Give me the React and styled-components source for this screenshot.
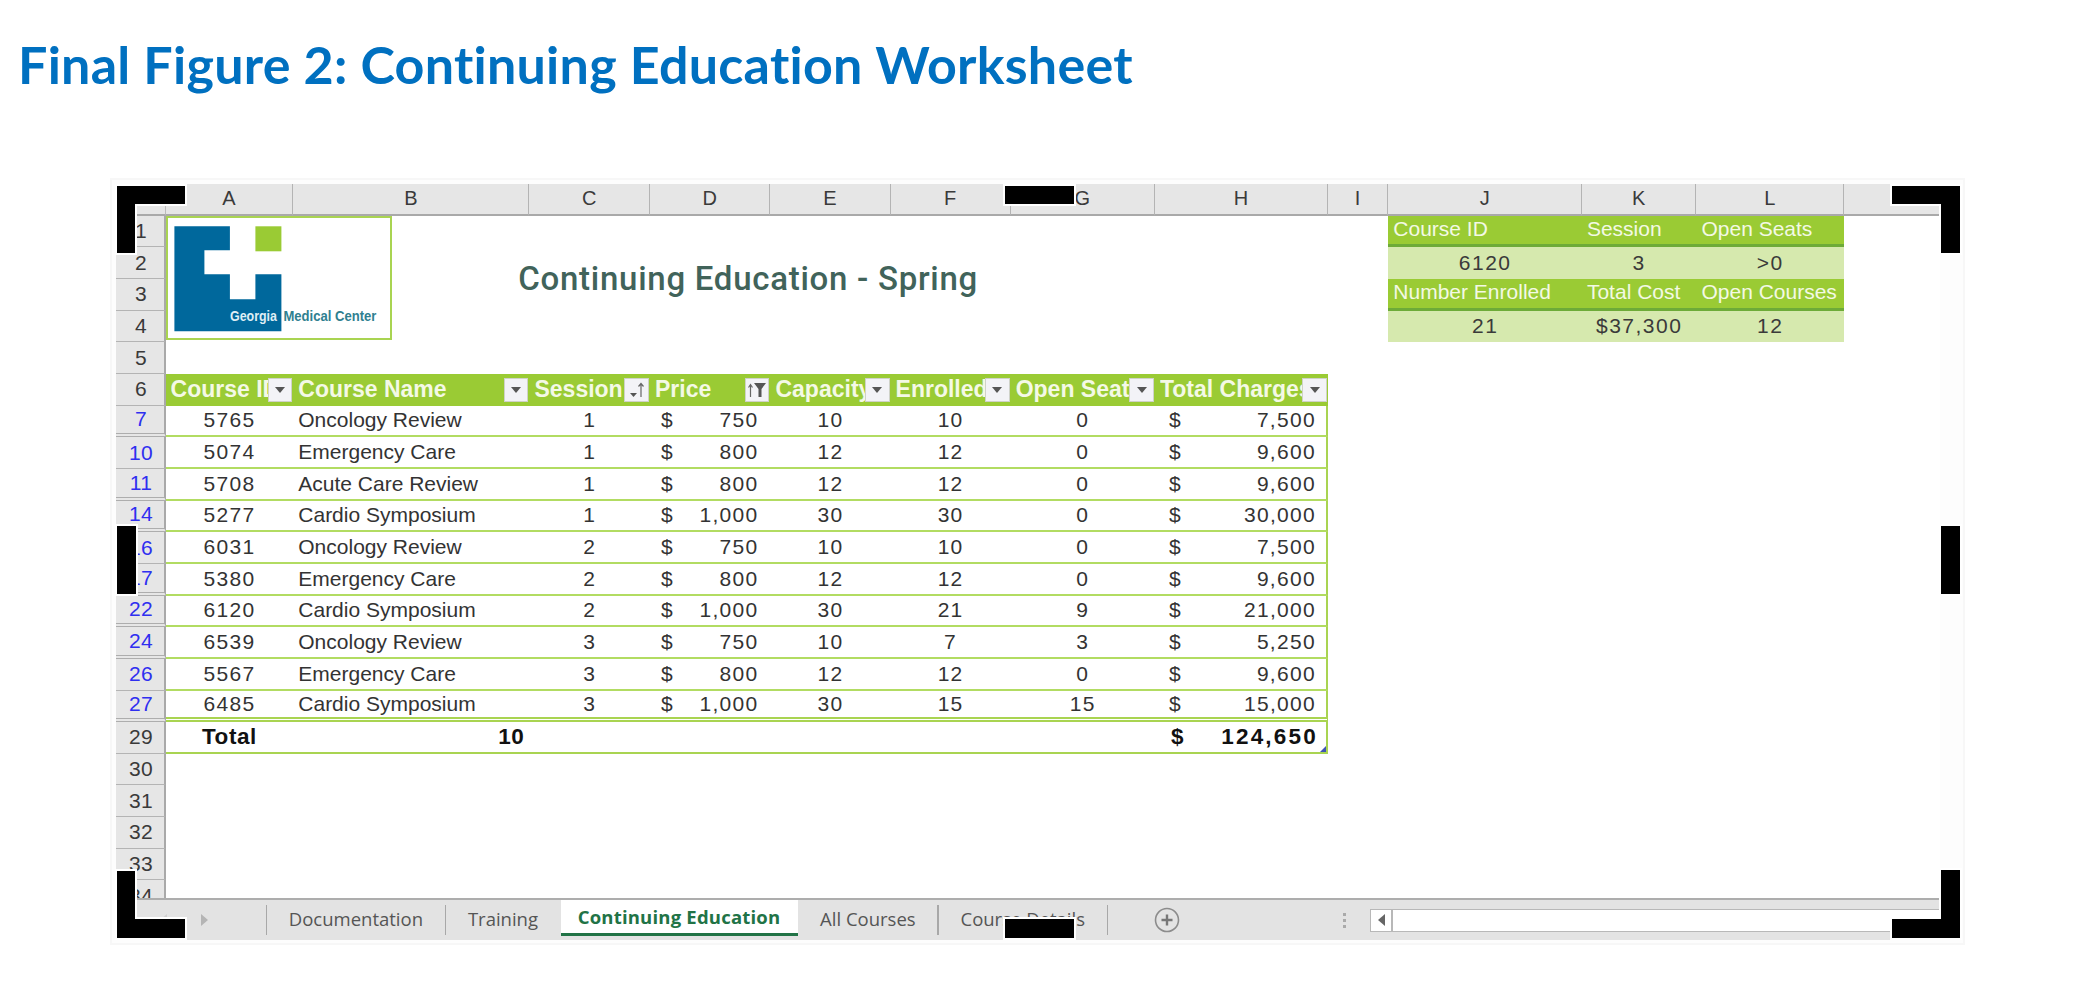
import React from 'react'
import styled, { createGlobalStyle } from 'styled-components'

const GlobalStyle = createGlobalStyle`
  html, body {
    margin: 0;
    padding: 0;
    background: #fff;
  }
  * {
    box-sizing: border-box;
  }
`

const LETTERS = ['A', 'B', 'C', 'D', 'E', 'F', 'G', 'H', 'I', 'J', 'K', 'L', '']

const HEADERS = [
  { label: 'Course ID', icon: 'drop' },
  { label: 'Course Name', icon: 'drop' },
  { label: 'Session', icon: 'sort' },
  { label: 'Price', icon: 'filter' },
  { label: 'Capacity', icon: 'drop' },
  { label: 'Enrolled', icon: 'drop' },
  { label: 'Open Seats', icon: 'drop' },
  { label: 'Total Charges', icon: 'drop' },
]

// row number, id, name, session, price, capacity, enrolled, open, total, gap after
const ROWS = [
  [7, '5765', 'Oncology Review', '1', '750', '10', '10', '0', '7,500', true],
  [10, '5074', 'Emergency Care', '1', '800', '12', '12', '0', '9,600', false],
  [11, '5708', 'Acute Care Review', '1', '800', '12', '12', '0', '9,600', true],
  [14, '5277', 'Cardio Symposium', '1', '1,000', '30', '30', '0', '30,000', true],
  [16, '6031', 'Oncology Review', '2', '750', '10', '10', '0', '7,500', false],
  [17, '5380', 'Emergency Care', '2', '800', '12', '12', '0', '9,600', true],
  [22, '6120', 'Cardio Symposium', '2', '1,000', '30', '21', '9', '21,000', true],
  [24, '6539', 'Oncology Review', '3', '750', '10', '7', '3', '5,250', true],
  [26, '5567', 'Emergency Care', '3', '800', '12', '12', '0', '9,600', false],
  [27, '6485', 'Cardio Symposium', '3', '1,000', '30', '15', '15', '15,000', true],
]

const SUMMARY = [
  ['Course ID', 'Session', 'Open Seats'],
  ['6120', '3', '>0'],
  ['Number Enrolled', 'Total Cost', 'Open Courses'],
  ['21', '$37,300', '12'],
]

const TABS = ['Documentation', 'Training', 'Continuing Education', 'All Courses', 'Course Details']

const App = () => {
  return (
    <Page>
      <GlobalStyle />
      <PageTitle>Final Figure 2: Continuing Education Worksheet</PageTitle>
      <Frame>
        <Sheet>
          <Grid>
            <Corner />
            {LETTERS.map((l, i) => (
              <ColHead key={i} $col={i + 2}>{l}</ColHead>
            ))}

            {[1, 2, 3, 4, 5, 6].map((n) => (
              <RowHead key={n} $row={n + 1}>{n}</RowHead>
            ))}

            <LogoBox>
              <svg width='222' height='120' viewBox='2 2 222 120'>
                <polygon
                  fill='#00689c'
                  points='8.4,10.3 63.9,10.3 63.9,34.3 38.4,34.3 38.4,58.3 63.9,58.3 63.9,83.3 89.4,83.3 89.4,58.3 115.4,58.3 115.4,115.3 8.4,115.3'
                />
                <rect x='89.4' y='10.3' width='26' height='25' fill='#9acb34' />
                <LogoText x='64' y='105' textLength='47' lengthAdjust='spacingAndGlyphs' fill='#dfeef5'>
                  Georgia
                </LogoText>
                <LogoText x='117.4' y='105' textLength='93' lengthAdjust='spacingAndGlyphs' fill='#2f8090'>
                  Medical Center
                </LogoText>
              </svg>
            </LogoBox>
            <SheetTitle>Continuing Education - Spring</SheetTitle>

            {SUMMARY.map((line, r) =>
              line.map((text, c) =>
                r % 2 === 0 ? (
                  <SummaryHead key={text} $row={r + 2} $col={c + 11}>{text}</SummaryHead>
                ) : (
                  <SummaryValue key={text} $row={r + 2} $col={c + 11}>{text}</SummaryValue>
                )
              )
            )}

            {HEADERS.map((h, i) => (
              <HeadCell key={h.label} $col={i + 2}>
                <HeadLabel>{h.label}</HeadLabel>
                <FilterButton>
                  <FilterIcon type={h.icon} />
                </FilterButton>
              </HeadCell>
            ))}

            {ROWS.map((r, i) => {
              const row = i + 8
              const [num, id, name, session, price, capacity, enrolled, open, total, gap] = r
              const last = i === ROWS.length - 1
              return (
                <React.Fragment key={num}>
                  <RowHead $row={row} $blue $gap={gap}>{num}</RowHead>
                  <Cell $row={row} $col={2} $center $double={last}>{id}</Cell>
                  <NameCell $row={row} $col={3} $double={last}>{name}</NameCell>
                  <Cell $row={row} $col={4} $center $double={last}>{session}</Cell>
                  <MoneyCell $row={row} $col={5} $double={last}>
                    <span>$</span>
                    <span>{price}</span>
                  </MoneyCell>
                  <Cell $row={row} $col={6} $center $double={last}>{capacity}</Cell>
                  <Cell $row={row} $col={7} $center $double={last}>{enrolled}</Cell>
                  <Cell $row={row} $col={8} $center $double={last}>{open}</Cell>
                  <MoneyCell $row={row} $col={9} $end $double={last}>
                    <span>$</span>
                    <span>{total}</span>
                  </MoneyCell>
                </React.Fragment>
              )
            })}

            <RowHead $row={18}>29</RowHead>
            <TotalCell $row={18} $col={2} $center>Total</TotalCell>
            <TotalCell $row={18} $col={3} $right>10</TotalCell>
            {[4, 5, 6, 7, 8].map((c) => (
              <TotalCell key={c} $row={18} $col={c} />
            ))}
            <TotalMoney $row={18} $col={9} $end>
              <span>$</span>
              <span>124,650</span>
              <ResizeHandle />
            </TotalMoney>

            {[30, 31, 32, 33, 34].map((n, i) => (
              <RowHead key={n} $row={i + 19}>{n}</RowHead>
            ))}
          </Grid>

          <TabBar>
            <TabArrows>
              <ArrowLeft $faint />
              <ArrowRight />
            </TabArrows>
            <TabSep />
            {TABS.map((t, i) => (
              <React.Fragment key={t}>
                <Tab $active={i === 2}>{t}</Tab>
                {i !== 1 && i !== 2 && <TabSep />}
              </React.Fragment>
            ))}
            <AddSheet>
              <svg width='26' height='26' viewBox='0 0 26 26'>
                <circle cx='13' cy='13' r='11.5' fill='none' stroke='#8c8c8c' strokeWidth='1.6' />
                <path d='M13 7.5v11M7.5 13h11' stroke='#777' strokeWidth='2.4' />
              </svg>
            </AddSheet>
            <Grip>
              <i />
              <i />
              <i />
            </Grip>
            <ScrollTrack>
              <ScrollButton>
                <ArrowLeft />
              </ScrollButton>
            </ScrollTrack>
          </TabBar>
        </Sheet>
      </Frame>

      <CropMarks width='2079' height='997' viewBox='0 0 2079 997'>
        <g fill='#000' stroke='#fff' strokeWidth='4' paintOrder='stroke'>
          <polygon points='117,186 185,186 185,204 135,204 135,253 117,253' />
          <rect x='1005' y='186' width='69' height='18' />
          <polygon points='1892,186 1960,186 1960,253 1941,253 1941,204 1892,204' />
          <rect x='117' y='526' width='19' height='68' />
          <rect x='1941' y='526' width='19' height='68' />
          <polygon points='117,871 135,871 135,919 185,919 185,938 117,938' />
          <rect x='1005' y='919' width='69' height='19' />
          <polygon points='1941,870 1960,870 1960,938 1892,938 1892,919 1941,919' />
        </g>
      </CropMarks>
    </Page>
  )
}

const FilterIcon = ({ type }) => {
  if (type === 'sort') {
    return (
      <svg width='18' height='18' viewBox='0 0 18 18'>
        <path d='M2 12h7l-3.5 4z' fill='#555' />
        <path d='M13 16V3M10.5 5.5L13 2.5l2.5 3' fill='none' stroke='#666' strokeWidth='1.2' />
      </svg>
    )
  }
  if (type === 'filter') {
    return (
      <svg width='20' height='18' viewBox='0 0 20 18'>
        <path d='M3.5 16V4M1.5 6.5L3.5 3.5l2 3' fill='none' stroke='#666' strokeWidth='1.2' />
        <path d='M7 2h12l-4.5 6v8h-3V8z' fill='#555' />
      </svg>
    )
  }
  return (
    <svg width='12' height='8' viewBox='0 0 12 8'>
      <path d='M1 1h10l-5 6z' fill='#555' />
    </svg>
  )
}

export default App

const sansStack = `'Liberation Sans', Arial, sans-serif`

const Page = styled.div`
  position: relative;
  width: 2079px;
  height: 997px;
  overflow: hidden;
  background: #fff;
  padding: 33px 0 0 18px;
`

const PageTitle = styled.h1`
  margin: 0;
  height: 145px;
  font-family: 'Lato', sans-serif;
  font-size: 52px;
  line-height: 62px;
  font-weight: 700;
  letter-spacing: 0.25px;
  color: #0070c0;
`

const Frame = styled.div`
  margin-left: 92px;
  width: 1855px;
  height: 767px;
  padding: 4px 0 0 3.6px;
  background: #fdfdfd;
  border: 2px solid #f7f7f7;
`

const Sheet = styled.div`
  width: 1824px;
  height: 756px;
  background: #fff;
  font-family: ${sansStack};
  display: flex;
  flex-direction: column;
`

const Grid = styled.div`
  flex: 0 0 714px;
  display: grid;
  grid-template-columns: 50px 127.7px 236.2px 120.5px 120.5px 120.1px 120.1px 144.3px 173px 60.4px 193.6px 114.5px 147.5px 1fr;
  grid-auto-rows: 31.67px;
  overflow: hidden;
  font-size: 21px;
  color: #333;
`

const Corner = styled.div`
  grid-area: 1 / 1;
  background: #e6e6e6;
  border-bottom: 2px solid #a9a9a9;
  border-right: 1px solid #bbb;
`

const ColHead = styled.div`
  grid-area: 1 / ${(p) => p.$col};
  display: flex;
  align-items: center;
  justify-content: center;
  background: #e6e6e6;
  border-bottom: 2px solid #a9a9a9;
  border-right: ${(p) => (p.$col === 14 ? 'none' : '1.5px solid #b4b4b4')};
  font-size: 20px;
  color: #3a3a3a;
`

const RowHead = styled.div`
  grid-area: ${(p) => p.$row} / 1;
  display: flex;
  align-items: center;
  justify-content: center;
  padding-left: 3px;
  letter-spacing: 0.5px;
  background: #e6e6e6;
  border-right: 2px solid #a9a9a9;
  border-bottom: ${(p) => (p.$gap ? '4px double #adadad' : '1.5px solid #b4b4b4')};
  color: ${(p) => (p.$blue ? '#2f2ff0' : '#3a3a3a')};
`

const LogoBox = styled.div`
  grid-area: 2 / 2 / span 4 / span 2;
  justify-self: start;
  align-self: start;
  width: 226px;
  height: 124.5px;
  border: 2px solid #a9d451;
  background: #fff;
`

const LogoText = styled.text`
  font-family: ${sansStack};
  font-size: 15px;
  font-weight: 700;
`

const SheetTitle = styled.div`
  grid-area: 2 / 3 / span 4 / span 6;
  display: flex;
  align-items: center;
  padding-left: 225px;
  font-family: 'Roboto', sans-serif;
  font-weight: 500;
  font-size: 33px;
  letter-spacing: 0.73px;
  white-space: nowrap;
  color: #41635a;
`

const SummaryHead = styled.div`
  grid-area: ${(p) => p.$row} / ${(p) => p.$col};
  display: flex;
  align-items: center;
  padding: 0 0 2px 5px;
  background: #9acb34;
  border-bottom: 3px solid #6dab38;
  color: #f3f9e4;
  white-space: nowrap;
  overflow: hidden;
`

const SummaryValue = styled.div`
  grid-area: ${(p) => p.$row} / ${(p) => p.$col};
  display: flex;
  align-items: center;
  justify-content: center;
  background: #d6e9ae;
  letter-spacing: 1.5px;
  color: #3a3a3a;
`

const HeadCell = styled.div`
  grid-area: 7 / ${(p) => p.$col};
  display: flex;
  align-items: center;
  padding: 0 1px 0 5px;
  background: #9acb34;
  min-width: 0;
`

const HeadLabel = styled.span`
  flex: 1;
  min-width: 0;
  overflow: hidden;
  white-space: nowrap;
  font-size: 23px;
  font-weight: 700;
  color: #f4f9e6;
`

const FilterButton = styled.span`
  flex: 0 0 24.5px;
  height: 24px;
  display: flex;
  align-items: center;
  justify-content: center;
  background: #f3f3f7;
  border: 1px solid #cfd2c8;
`

const Cell = styled.div`
  grid-area: ${(p) => p.$row} / ${(p) => p.$col};
  display: flex;
  align-items: center;
  justify-content: ${(p) => (p.$center ? 'center' : 'flex-start')};
  letter-spacing: 1.3px;
  color: #333;
  background: #fff;
  border-bottom: ${(p) => (p.$double ? '5px double #a9d451' : '2px solid #b2dc62')};
  ${(p) => p.$col === 9 && 'border-right: 2px solid #a9d451;'}
`

const NameCell = styled(Cell)`
  padding-left: 5px;
  letter-spacing: 0;
  white-space: nowrap;
`

const MoneyCell = styled(Cell)`
  justify-content: space-between;
  padding: 0 ${(p) => (p.$end ? '10px' : '12px')} 0 ${(p) => (p.$end ? '14px' : '11px')};
`

const TotalCell = styled.div`
  grid-area: ${(p) => p.$row} / ${(p) => p.$col};
  display: flex;
  align-items: center;
  justify-content: ${(p) => (p.$center ? 'center' : p.$right ? 'flex-end' : 'flex-start')};
  padding-right: ${(p) => (p.$right ? '5px' : '0')};
  font-size: 22.5px;
  letter-spacing: 0.6px;
  font-weight: 700;
  color: #111;
  background: #fff;
  border-bottom: 2px solid #a9d451;
`

const TotalMoney = styled(TotalCell)`
  position: relative;
  justify-content: space-between;
  padding: 0 8px 0 16px;
  letter-spacing: 2.2px;
  border-right: 2px solid #a9d451;
`

const ResizeHandle = styled.span`
  position: absolute;
  right: 0;
  bottom: 0;
  width: 0;
  height: 0;
  border-style: solid;
  border-width: 0 0 6px 6px;
  border-color: transparent transparent #3f55b5 transparent;
`

const TabBar = styled.div`
  flex: 0 0 42px;
  display: flex;
  align-items: center;
  background: #e3e3e3;
  border-top: 2px solid #adadad;
  font-family: 'Open Sans', sans-serif;
  font-size: 18.5px;
  color: #555;
`

const TabArrows = styled.div`
  flex: 0 0 150px;
  display: flex;
  justify-content: flex-end;
  gap: 34px;
  padding-right: 58px;
`

const ArrowLeft = styled.span`
  width: 0;
  height: 0;
  border-style: solid;
  border-width: 6px 7px 6px 0;
  border-color: transparent ${(p) => (p.$faint ? '#cfcfcf' : '#666')} transparent transparent;
`

const ArrowRight = styled.span`
  width: 0;
  height: 0;
  border-style: solid;
  border-width: 6px 0 6px 7px;
  border-color: transparent transparent transparent #b5b5b5;
`

const TabSep = styled.span`
  flex: 0 0 1.5px;
  height: 30px;
  background: #a8a8a8;
`

const Tab = styled.div`
  align-self: stretch;
  display: flex;
  align-items: center;
  padding: 0 21.7px 4px;
  white-space: nowrap;
  ${(p) =>
    p.$active &&
    `
    margin-left: 1px;
    margin-bottom: 4px;
    padding: 0 18px 0 17px;
    background: #fff;
    color: #217346;
    font-weight: 700;
    letter-spacing: 0.2px;
    border-bottom: 3px solid #217346;
  `}
`

const AddSheet = styled.div`
  margin-left: 46px;
  display: flex;
  align-items: center;
`

const Grip = styled.div`
  margin-left: 163px;
  display: flex;
  flex-direction: column;
  gap: 3px;

  i {
    display: block;
    width: 3px;
    height: 3px;
    background: #aaa;
  }
`

const ScrollTrack = styled.div`
  margin-left: 24px;
  flex: 1;
  height: 23px;
  background: #fff;
  border: 1.5px solid #b8b8b8;
  border-right: none;
  display: flex;
`

const ScrollButton = styled.div`
  flex: 0 0 22px;
  display: flex;
  align-items: center;
  justify-content: center;
  border-right: 2px solid #b8b8b8;
`

const CropMarks = styled.svg`
  position: absolute;
  inset: 0;
  pointer-events: none;
`
